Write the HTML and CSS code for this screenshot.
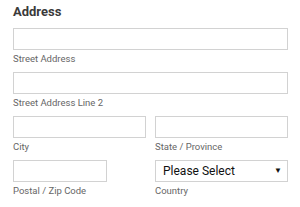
FILE: index.html
```html
<!DOCTYPE html>
<html lang="en">
<head>
<meta charset="UTF-8">
<title>Address</title>
<link rel="stylesheet" href="styles.css">
</head>
<body>
<div class="form">
    <h3 class="title">Address</h3>
    <div class="row">
        <div class="field full">
            <input type="text" id="street1">
            <label for="street1">Street Address</label>
        </div>
    </div>
    <div class="row">
        <div class="field full">
            <input type="text" id="street2">
            <label for="street2">Street Address Line 2</label>
        </div>
    </div>
    <div class="row">
        <div class="field half">
            <input type="text" id="city">
            <label for="city">City</label>
        </div>
        <div class="field half">
            <input type="text" id="state">
            <label for="state">State / Province</label>
        </div>
    </div>
    <div class="row">
        <div class="field half">
            <input type="text" id="postal" class="short">
            <label for="postal">Postal / Zip Code</label>
        </div>
        <div class="field half">
            <div class="select-wrap">
                <select id="country">
                    <option>Please Select</option>
                </select>
                <span class="arrow">&#9660;</span>
            </div>
            <label for="country">Country</label>
        </div>
    </div>
</div>
</body>
</html>
```

FILE: styles.css
```css
/* Address block */
body {
    margin: 0;
    padding: 0;
    background: #fff;
    font-family: Roboto, "Liberation Sans", sans-serif;
}

.form {
    width: 275px;
    padding: 0 12px 0 13px;
}

.title {
    margin: 0;
    padding-top: 4px;
    height: 24px;
    font-size: 13px;
    font-weight: bold;
    color: #3a3a3a;
}

.row {
    display: flex;
    gap: 9px;
    height: 44px;
}

.field {
    display: flex;
    flex-direction: column;
}

.full {
    width: 100%;
}

.half {
    flex: 1;
}

input,
select {
    box-sizing: border-box;
    height: 22px;
    width: 100%;
    border: 1px solid #d2d2d2;
    border-radius: 0;
    margin: 0;
    background: #fff;
}

input.short {
    width: 94px;
}

label {
    font-size: 9.5px;
    line-height: 12px;
    margin-top: 3px;
    color: #666;
}

.select-wrap {
    position: relative;
}

select {
    appearance: none;
    -webkit-appearance: none;
    padding: 0 0 0 7px;
    font-family: Roboto, "Liberation Sans", sans-serif;
    font-size: 12px;
    color: #111;
}

.arrow {
    position: absolute;
    right: 6px;
    top: 6px;
    font-size: 8px;
    color: #111;
    pointer-events: none;
}
```
